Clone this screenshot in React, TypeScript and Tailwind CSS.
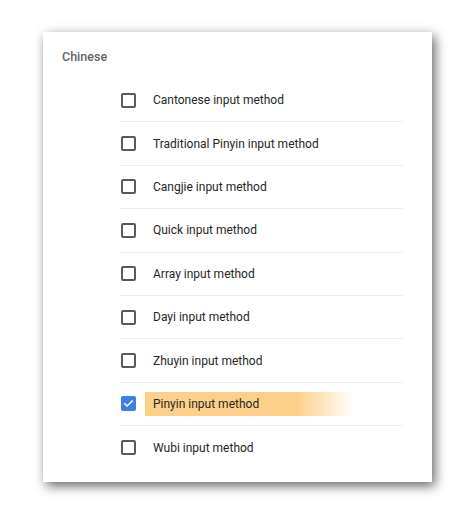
import React from "react";

const items = [
  "Cantonese input method",
  "Traditional Pinyin input method",
  "Cangjie input method",
  "Quick input method",
  "Array input method",
  "Dayi input method",
  "Zhuyin input method",
  "Pinyin input method",
  "Wubi input method",
];

function Box({ checked }: { checked: boolean }) {
  if (checked) {
    return (
      <div className="w-[15px] h-[15px] rounded-[2px] bg-[#3d7fe8] flex items-center justify-center shrink-0">
        <svg width="11" height="11" viewBox="0 0 24 24" fill="none">
          <path d="M4 12.5l5 5L20 6.5" stroke="#fff" strokeWidth="3.4" strokeLinecap="square" />
        </svg>
      </div>
    );
  }
  return <div className="w-[15px] h-[15px] rounded-[2px] border-2 border-[#5a5a5a] shrink-0" />;
}

export default function App() {
  return (
    <div className="w-[474px] h-[516px] bg-white relative" style={{ fontFamily: "Roboto, 'Liberation Sans', sans-serif" }}>
      <div className="absolute left-[43px] top-[32px] w-[389px] h-[450px] bg-white shadow-[3px_4px_11px_rgba(0,0,0,0.6)]">
        <div className="pl-[19px] pt-[17px] text-[12.5px] font-medium text-[#646464] leading-[16px]">Chinese</div>
        <div className="ml-[77px] mr-[29px] mt-[14px]">
          {items.map((t, i) => {
            const checked = i === 7;
            return (
              <div
                key={t}
                className={`h-[43.4px] flex items-center ${i < items.length - 1 ? "border-b border-[#ececec]" : ""}`}
              >
                <div className="w-[25px] pl-[1px] flex items-center">
                  <Box checked={checked} />
                </div>
                {checked ? (
                  <div className="h-[24px] w-[210px] flex items-center pl-[8px] bg-[linear-gradient(to_right,#fdd089_0%,#fdd089_72%,rgba(253,208,137,0)_100%)] text-[12px] text-[#262626]">
                    {t}
                  </div>
                ) : (
                  <div className="pl-[8px] text-[12px] text-[#262626]">{t}</div>
                )}
              </div>
            );
          })}
        </div>
      </div>
    </div>
  );
}
